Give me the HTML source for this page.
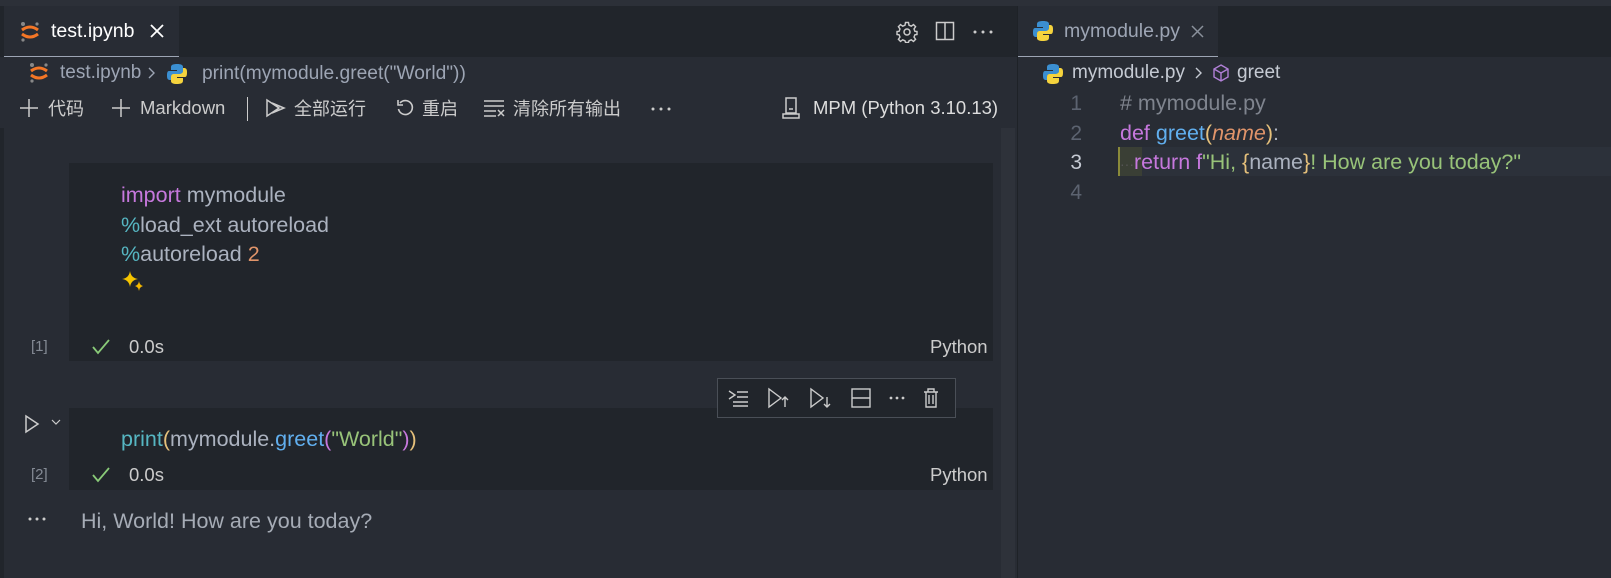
<!DOCTYPE html><html><head><meta charset="utf-8"><style>
*{margin:0;padding:0;box-sizing:border-box}
body{width:1611px;height:578px;background:#282c34;font-family:"Liberation Sans","Noto Sans CJK SC",sans-serif;color:#abb2bf;position:relative;overflow:hidden;font-size:18px}
.a{position:absolute;white-space:nowrap;line-height:1.2}
.g{color:#9da5b4}
.cjk{font-family:"Noto Sans CJK SC",sans-serif;line-height:1}
</style></head><body>
<div class="a" style="left:0;top:0;width:1611px;height:6px;background:#2c3038"></div>
<div class="a" style="left:0;top:6px;width:1611px;height:51px;background:#21252b"></div>
<div class="a" style="left:4px;top:6px;width:175px;height:51px;background:#282c34;border-bottom:1px solid #9da5b4"></div>
<svg class="a" style="left:19px;top:21px" width="22" height="22" viewBox="0 0 22 22"><circle cx="4" cy="3" r="2" fill="#888"/><circle cx="18" cy="3" r="1.6" fill="#888"/><circle cx="4" cy="19" r="1.6" fill="#888"/><path d="M3 9 Q11 3 19 9" stroke="#f37626" stroke-width="3" fill="none"/><path d="M3 13 Q11 19 19 13" stroke="#f37626" stroke-width="3" fill="none"/></svg>
<div class="a" style="left:51px;top:20px;color:#fff;font-size:19.5px">test.ipynb</div>
<svg class="a" style="left:150px;top:24px" width="14" height="14"><path d="M1 1L13 13M13 1L1 13" stroke="#fff" stroke-width="1.8"/></svg>
<svg class="a" style="left:896px;top:21px" width="22" height="22" viewBox="0 0 22 22"><circle cx="11" cy="11" r="3" stroke="#ccc" stroke-width="1.5" fill="none"/><path d="M9.5 1.5H12.5L13 4.2L15.3 5.2L17.5 3.6L19.6 5.7L18 8L18.9 10.3L21 10.5V13.5L18.9 13.8L18 16L19.6 18.3L17.5 20.4L15.3 18.8L13 19.8L12.5 21.5H9.5L9 19.8L6.7 18.8L4.5 20.4L2.4 18.3L4 16L3.1 13.8L1 13.5V10.5L3.1 10.3L4 8L2.4 5.7L4.5 3.6L6.7 5.2L9 4.2Z" stroke="#ccc" stroke-width="1.4" fill="none"/></svg>
<svg class="a" style="left:935px;top:21px" width="20" height="20"><rect x="1.5" y="1.5" width="17" height="17" stroke="#ccc" stroke-width="1.5" fill="none"/><line x1="10" y1="2" x2="10" y2="18" stroke="#ccc" stroke-width="1.5"/></svg>
<svg class="a" style="left:973px;top:30px" width="20" height="4"><circle cx="2" cy="2" r="1.5" fill="#ccc"/><circle cx="10" cy="2" r="1.5" fill="#ccc"/><circle cx="18" cy="2" r="1.5" fill="#ccc"/></svg>
<div class="a" style="left:1017px;top:6px;width:1px;height:572px;background:#1e2227"></div>
<div class="a" style="left:1018px;top:6px;width:200px;height:51px;background:#282c34;border-bottom:1px solid #9da5b4"></div>
<svg class="a" style="left:1032px;top:20px" width="22" height="22" viewBox="0 0 22 22"><path d="M11 1 C5 1 5 3 5 5 V7 H11 V8 H3 C1 8 1 11 1 13 C1 16 2 17 4 17 H5 V14 C5 12 7 11 9 11 H14 C16 11 17 10 17 8 V4 C17 2 15 1 11 1Z" fill="#3b8fd1"/><path d="M11 21 C17 21 17 19 17 17 V15 H11 V14 H19 C21 14 21 11 21 9 C21 6 20 5 18 5 H17 V8 C17 10 15 11 13 11 H8 C6 11 5 12 5 14 V18 C5 20 7 21 11 21Z" fill="#f5d33d"/></svg>
<div class="a g" style="left:1064px;top:20px;font-size:19.5px">mymodule.py</div>
<svg class="a" style="left:1191px;top:25px" width="13" height="13"><path d="M1 1L12 12M12 1L1 12" stroke="#8a919c" stroke-width="1.5"/></svg>
<!-- notebook breadcrumb -->
<svg class="a" style="left:28px;top:62px" width="22" height="22" viewBox="0 0 22 22"><circle cx="4" cy="3" r="2" fill="#888"/><circle cx="18" cy="3" r="1.6" fill="#888"/><circle cx="4" cy="19" r="1.6" fill="#888"/><path d="M3 9 Q11 3 19 9" stroke="#f37626" stroke-width="3" fill="none"/><path d="M3 13 Q11 19 19 13" stroke="#f37626" stroke-width="3" fill="none"/></svg>
<div class="a g" style="left:60px;top:62px;font-size:19px">test.ipynb</div>
<svg class="a" style="left:148px;top:67px" width="8" height="12"><path d="M1 1L6 6L1 11" stroke="#9da5b4" stroke-width="1.4" fill="none"/></svg>
<svg class="a" style="left:166px;top:63px" width="22" height="22" viewBox="0 0 22 22"><path d="M11 1 C5 1 5 3 5 5 V7 H11 V8 H3 C1 8 1 11 1 13 C1 16 2 17 4 17 H5 V14 C5 12 7 11 9 11 H14 C16 11 17 10 17 8 V4 C17 2 15 1 11 1Z" fill="#3b8fd1"/><path d="M11 21 C17 21 17 19 17 17 V15 H11 V14 H19 C21 14 21 11 21 9 C21 6 20 5 18 5 H17 V8 C17 10 15 11 13 11 H8 C6 11 5 12 5 14 V18 C5 20 7 21 11 21Z" fill="#f5d33d"/></svg>
<div class="a g" style="left:202px;top:62px;font-size:19.2px">print(mymodule.greet("World"))</div>
<!-- toolbar -->
<svg class="a" style="left:19px;top:98px" width="20" height="20"><path d="M10 1V19M1 10H19" stroke="#ccc" stroke-width="1.5"/></svg>
<div class="a cjk" style="left:48px;top:99px;color:#ccc;font-size:18px">代码</div>
<svg class="a" style="left:111px;top:98px" width="20" height="20"><path d="M10 1V19M1 10H19" stroke="#ccc" stroke-width="1.5"/></svg>
<div class="a" style="left:140px;top:97px;color:#ccc;font-size:18.5px">Markdown</div>
<div class="a" style="left:247px;top:97px;width:1px;height:24px;background:#ccc"></div>
<svg class="a" style="left:265px;top:98px" width="22" height="20"><path d="M2 2 L2 18 L14 10Z M7 5 L19 10 L7 15" stroke="#ccc" stroke-width="1.5" fill="none"/></svg>
<div class="a cjk" style="left:294px;top:99px;color:#ccc;font-size:18px">全部运行</div>
<svg class="a" style="left:396px;top:99px" width="18" height="18"><path d="M4 4A7 7 0 1 1 2.5 10" stroke="#ccc" stroke-width="1.6" fill="none"/><path d="M2 1V6H7" stroke="#ccc" stroke-width="1.6" fill="none"/></svg>
<div class="a cjk" style="left:422px;top:99px;color:#ccc;font-size:18px">重启</div>
<svg class="a" style="left:483px;top:99px" width="24" height="18"><path d="M1 2H21M1 7H21M1 12H13M1 17H13M15 11L21 17M21 11L15 17" stroke="#ccc" stroke-width="1.5"/></svg>
<div class="a cjk" style="left:513px;top:99px;color:#ccc;font-size:18px">清除所有输出</div>
<svg class="a" style="left:651px;top:107px" width="20" height="4"><circle cx="2" cy="2" r="1.5" fill="#ccc"/><circle cx="10" cy="2" r="1.5" fill="#ccc"/><circle cx="18" cy="2" r="1.5" fill="#ccc"/></svg>
<svg class="a" style="left:781px;top:97px" width="20" height="22"><path d="M5 1H15V16H5Z M2 17H18V21H2Z M8 12H12" stroke="#ccc" stroke-width="1.5" fill="none"/></svg>
<div class="a" style="left:813px;top:97px;color:#ddd;font-size:18.5px">MPM (Python 3.10.13)</div>
<!-- scroll strip -->
<div class="a" style="left:0;top:128px;width:4px;height:450px;background:#21252b"></div>
<div class="a" style="left:1001px;top:128px;width:14px;height:450px;background:#2e323a"></div>
<!-- cell1 -->
<div class="a" style="left:69px;top:163px;width:924px;height:198px;background:#21252b"></div>
<div class="a" style="left:121px;top:181px;line-height:29.5px;font-size:21.5px">
<span style="color:#c678dd">import</span> mymodule<br><span style="color:#56b6c2">%</span>load_ext autoreload<br><span style="color:#56b6c2">%</span>autoreload <span style="color:#e0946a">2</span></div>
<svg class="a" style="left:122px;top:271px" width="24" height="22"><path d="M8 0Q9 7 16 8Q9 9 8 16Q7 9 0 8Q7 7 8 0Z" fill="#f5c400"/><path d="M17 10Q17.5 14 21 15Q17.5 16 17 20Q16.5 16 13 15Q16.5 14 17 10Z" fill="#f5b800"/></svg>
<div class="a" style="left:31px;top:338px;color:#858b95;font-size:15px">[1]</div>
<svg class="a" style="left:92px;top:339px" width="18" height="16"><path d="M1 8L6 14L17 1" stroke="#89ca78" stroke-width="1.8" fill="none"/></svg>
<div class="a" style="left:129px;top:336px;color:#ccc;font-size:18.5px">0.0s</div>
<div class="a" style="left:930px;top:336px;color:#ccc;font-size:18.5px">Python</div>
<!-- cell2 -->
<svg class="a" style="left:24px;top:414px" width="16" height="20"><path d="M2 2V18L14 10Z" stroke="#ccc" stroke-width="1.5" fill="none"/></svg>
<svg class="a" style="left:51px;top:419px" width="10" height="7"><path d="M1 1L5 5L9 1" stroke="#ccc" stroke-width="1.2" fill="none"/></svg>
<div class="a" style="left:69px;top:408px;width:924px;height:82px;background:#21252b"></div>
<div class="a" style="left:121px;top:427px;font-size:21.5px"><span style="color:#56b6c2">print</span><span style="color:#e5c07b">(</span>mymodule.<span style="color:#61afef">greet</span><span style="color:#c678dd">(</span><span style="color:#98c379">"World"</span><span style="color:#c678dd">)</span><span style="color:#e5c07b">)</span></div>
<div class="a" style="left:31px;top:466px;color:#858b95;font-size:15px">[2]</div>
<svg class="a" style="left:92px;top:467px" width="18" height="16"><path d="M1 8L6 14L17 1" stroke="#89ca78" stroke-width="1.8" fill="none"/></svg>
<div class="a" style="left:129px;top:464px;color:#ccc;font-size:18.5px">0.0s</div>
<div class="a" style="left:930px;top:464px;color:#ccc;font-size:18.5px">Python</div>
<div class="a" style="left:717px;top:378px;width:239px;height:40px;background:#21252b;border:1px solid #4a4f57"></div>
<svg class="a" style="left:727px;top:387px" width="220" height="22"><g stroke="#ccc" stroke-width="1.4" fill="none">
<path d="M2 4L8 8L2 12M10 5H21M10 10H21M6 15H21M6 19H21"/>
<path d="M42 2V20L54 11Z M58 20V10M55 13L58 10L61 13"/>
<path d="M84 2V20L96 11Z M100 10V20M97 17L100 20L103 17"/>
<rect x="125" y="2" width="18" height="18"/><path d="M125 11H143"/>
<path d="M197 5H211M201 5V2H207V5M199 5V20H209V5M202 8V17M206 8V17"/></g>
<circle cx="164" cy="11" r="1.4" fill="#ccc"/><circle cx="170" cy="11" r="1.4" fill="#ccc"/><circle cx="176" cy="11" r="1.4" fill="#ccc"/></svg>
<svg class="a" style="left:28px;top:517px" width="18" height="4"><circle cx="2" cy="2" r="1.5" fill="#ccc"/><circle cx="9" cy="2" r="1.5" fill="#ccc"/><circle cx="16" cy="2" r="1.5" fill="#ccc"/></svg>
<div class="a" style="left:81px;top:509px;color:#a6acb6;font-size:21.5px">Hi, World! How are you today?</div>
<!-- right editor -->
<svg class="a" style="left:1042px;top:63px" width="22" height="22" viewBox="0 0 22 22"><path d="M11 1 C5 1 5 3 5 5 V7 H11 V8 H3 C1 8 1 11 1 13 C1 16 2 17 4 17 H5 V14 C5 12 7 11 9 11 H14 C16 11 17 10 17 8 V4 C17 2 15 1 11 1Z" fill="#3b8fd1"/><path d="M11 21 C17 21 17 19 17 17 V15 H11 V14 H19 C21 14 21 11 21 9 C21 6 20 5 18 5 H17 V8 C17 10 15 11 13 11 H8 C6 11 5 12 5 14 V18 C5 20 7 21 11 21Z" fill="#f5d33d"/></svg>
<div class="a" style="left:1072px;top:62px;color:#c5cad3;font-size:19px">mymodule.py</div>
<svg class="a" style="left:1195px;top:67px" width="8" height="12"><path d="M1 1L6 6L1 11" stroke="#c5cad3" stroke-width="1.4" fill="none"/></svg>
<svg class="a" style="left:1211px;top:63px" width="20" height="20"><path d="M10 2L17 6V14L10 18L3 14V6Z M3 6L10 10L17 6 M10 10V18" stroke="#b180d7" stroke-width="1.4" fill="none"/></svg>
<div class="a" style="left:1237px;top:62px;color:#c5cad3;font-size:19px">greet</div>
<div class="a" style="left:1118px;top:147px;width:493px;height:29px;background:#2c313a"></div>
<div class="a" style="left:1118px;top:147px;width:24px;height:29px;background:#3a3f35;border-left:2px solid #8a8a3a"></div>
<div class="a" style="left:1058px;top:89px;line-height:29.5px;font-size:21px;color:#5c6370;text-align:right;width:24px">1<br>2<br><span style="color:#c5cad3">3</span><br>4</div>
<div class="a" style="left:1120px;top:89px;line-height:29.5px;font-size:21.5px">
<span style="color:#7f848e"># mymodule.py</span><br><span style="color:#c678dd">def</span> <span style="color:#61afef">greet</span><span style="color:#e5c07b">(</span><i style="color:#e0946a">name</i><span style="color:#e5c07b">)</span>:<br><span style="color:#555;font-size:14px">···</span><span style="color:#c678dd">return</span> <span style="color:#c678dd">f</span><span style="color:#98c379">"Hi, </span><span style="color:#e5c07b">{</span>name<span style="color:#e5c07b">}</span><span style="color:#98c379">! How are you today?"</span></div>
</body></html>
